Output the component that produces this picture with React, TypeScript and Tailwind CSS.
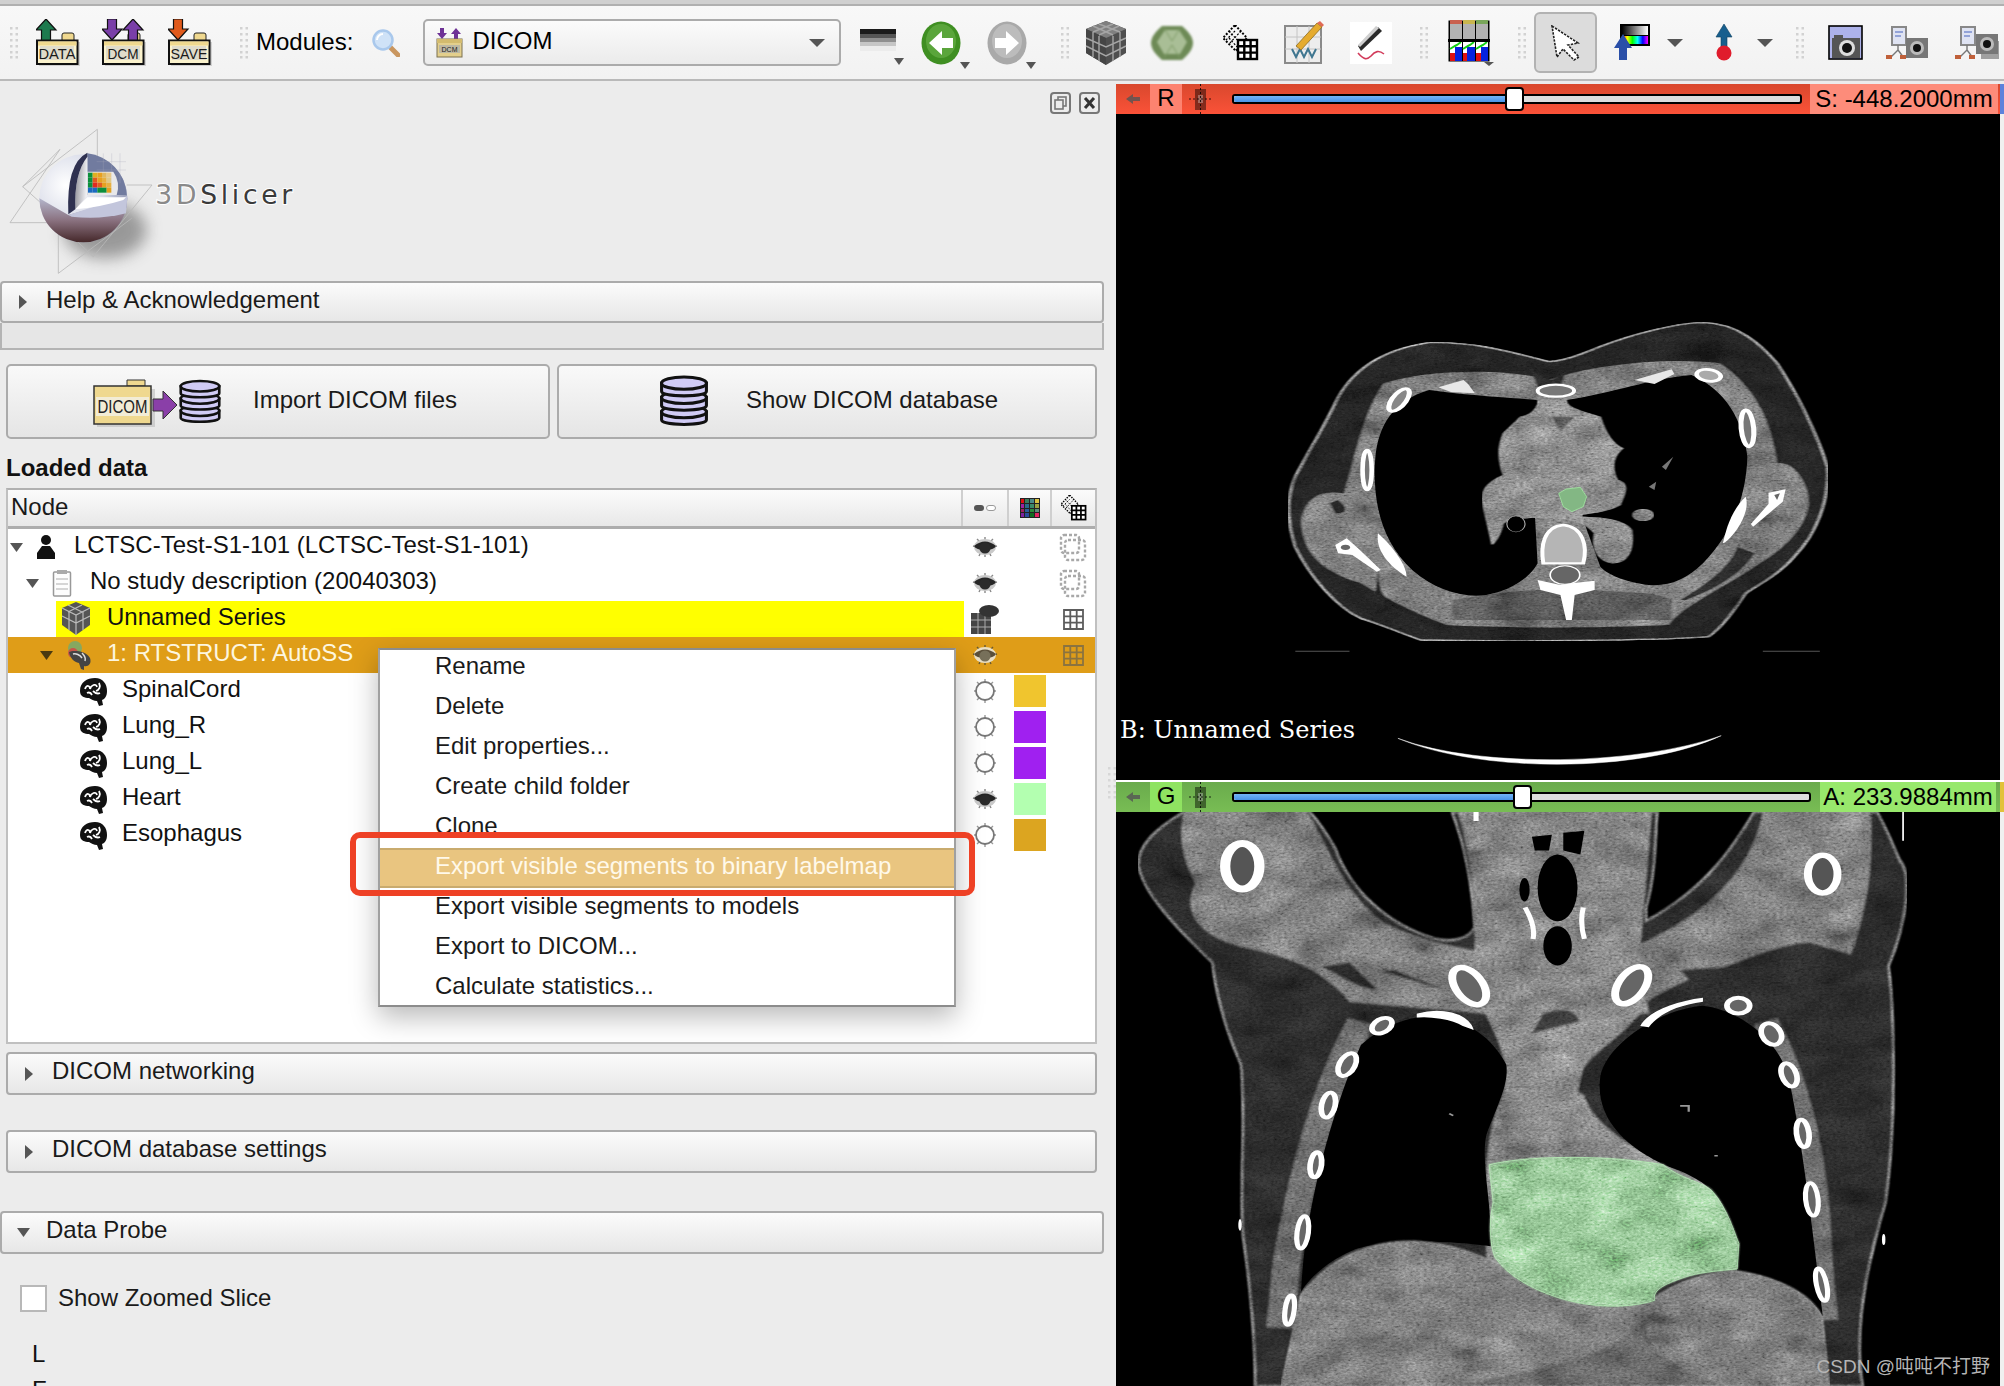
import React from 'react';

const SANS = "font-['Liberation_Sans',Arial,sans-serif]";

// ---- small toolbar drawings ----

function Grip({ className = '' }: { className?: string }) {
  return (
    <svg width="8" height="32" viewBox="0 0 8 32" className={`shrink-0 ${className}`}>
      {[0, 6, 12, 18, 24, 29].map((y) => (
        <g key={y} fill="#d2d2d2">
          <rect x="0" y={y} width="2.5" height="2.5" />
          <rect x="5.5" y={y} width="2.5" height="2.5" />
        </g>
      ))}
    </svg>
  );
}

function Arrow({ x, up, color }: { x: number; up: boolean; color: string }) {
  const pts = up ? '10,0 20,11 14.5,11 14.5,21 5.5,21 5.5,11 0,11' : '5.5,0 14.5,0 14.5,10 20,10 10,21 0,10 5.5,10';
  return <polygon points={pts} transform={`translate(${x} 0)`} fill={color} stroke="#111" strokeWidth="1.2" />;
}

function FolderIcon({ label, children, className = '' }: { label: string; children: React.ReactNode; className?: string }) {
  return (
    <svg width="45" height="48" viewBox="0 0 45 48" className={`shrink-0 ${className}`}>
      <rect x="3" y="23" width="41" height="24" fill="#bbb" opacity="0.6" />
      <path d="M26 22 V16 Q26 14 28 14 H36 Q38 14 38 16 V22 Z" fill="#efd88f" stroke="#222" strokeWidth="1" />
      <rect x="1" y="21.5" width="40.5" height="23.5" fill="#fbf3cd" stroke="#111" strokeWidth="2" />
      <rect x="2" y="22.5" width="38.5" height="4" fill="#efd88f" />
      <rect x="4" y="27" width="34" height="14" fill="#e0dccb" />
      <text x="21" y="40" textAnchor="middle" fontFamily="Liberation Sans" fontSize="15" textLength={label.length > 3 ? 37 : 31} lengthAdjust="spacingAndGlyphs" fill="#1a1a1a">
        {label}
      </text>
      {children}
    </svg>
  );
}

function Magnifier({ className = '' }: { className?: string }) {
  return (
    <svg width="28" height="28" viewBox="0 0 28 28" className={`shrink-0 ${className}`}>
      <line x1="18" y1="18" x2="26" y2="26" stroke="#c9965f" strokeWidth="5" strokeLinecap="round" />
      <circle cx="11" cy="11" r="9.5" fill="#cfe2f7" stroke="#a9c8ec" strokeWidth="2.5" />
      <path d="M5 11 A6 6 0 0 1 11 5" stroke="#fff" strokeWidth="2" fill="none" />
    </svg>
  );
}

function DicomModuleIcon({ className = '' }: { className?: string }) {
  return (
    <svg width="27" height="30" viewBox="0 0 27 30" className={`shrink-0 ${className}`}>
      <polygon points="4,0 8,0 8,5 11,5 6,11 1,5 4,5" fill="#6e3296" />
      <polygon points="20,0 25,6 22,6 22,11 18,11 18,6 15,6" fill="#6e3296" />
      <rect x="1" y="11" width="25" height="18" fill="#e3cf8c" stroke="#7a7150" />
      <rect x="1" y="11" width="25" height="4" fill="#d3bb6e" />
      <rect x="3" y="17" width="21" height="8" fill="#bdb8a2" />
      <text x="13.5" y="24" textAnchor="middle" fontFamily="Liberation Sans" fontSize="7" fill="#222">DCM</text>
    </svg>
  );
}

function SmallDown({ className = '' }: { className?: string }) {
  return (
    <svg width="10" height="7" viewBox="0 0 10 7" className={`shrink-0 ${className}`}>
      <polygon points="0,0 10,0 5,7" fill="#555" />
    </svg>
  );
}

function MenuDown({ className = '' }: { className?: string }) {
  return (
    <svg width="16" height="8" viewBox="0 0 16 8" className={`shrink-0 ${className}`}>
      <polygon points="0,0 16,0 8,8" fill="#555" />
    </svg>
  );
}

function StopsIcon() {
  return (
    <svg width="36" height="22" viewBox="0 0 36 22" className="shrink-0">
      <rect width="36" height="5" fill="#1a1a1a" />
      <rect y="5" width="36" height="4" fill="#555" />
      <rect y="9" width="36" height="4" fill="#8f8f8f" />
      <rect y="13" width="36" height="4" fill="#c6c6c6" />
      <rect y="17" width="36" height="5" fill="#ececec" />
    </svg>
  );
}

function HistoryArrow({ back }: { back: boolean }) {
  const fill = back ? '#3f8f22' : '#a9a9a9';
  const rim = back ? '#7cc15c' : '#d2d2d2';
  const head = back ? '8,22 21,10 21,17 32,17 32,27 21,27 21,34' : '32,22 19,10 19,17 8,17 8,27 19,27 19,34';
  return (
    <svg width="40" height="44" viewBox="0 0 40 44" className="shrink-0">
      <ellipse cx="20" cy="22" rx="19.5" ry="21.5" fill={fill} />
      <ellipse cx="20" cy="20" rx="15" ry="17" fill={rim} opacity="0.45" />
      <polygon points={head} fill="#fff" />
    </svg>
  );
}

function CubeIcon({ className = '' }: { className?: string }) {
  return (
    <svg width="42" height="46" viewBox="0 0 42 46" className={`shrink-0 blur-[0.5px] ${className}`}>
      <polygon points="21,1 41,9 41,33 21,45 1,33 1,9" fill="#4f4f4f" />
      <polygon points="21,1 41,9 21,18 1,9" fill="#7f7f7f" />
      <polygon points="1,9 21,18 21,45 1,33" fill="#454545" />
      <g stroke="#a5a5a5" strokeWidth="1.4" fill="none">
        <path d="M8 6 L28 15 M14 4 L35 12 M34 6 L14 15 M28 4 L8 12" />
        <path d="M1 18 L21 27 L41 18 M1 26 L21 36 L41 26 M8 12 V37 M14 16 V41 M28 16 V41 M35 12 V37" />
      </g>
    </svg>
  );
}

function BarrelIcon({ className = '' }: { className?: string }) {
  return (
    <svg width="44" height="36" viewBox="0 0 44 36" className={`shrink-0 blur-[0.8px] ${className}`}>
      <path d="M12 1 H32 C38 6 43 12 43 18 C43 24 38 30 32 35 H12 C6 30 1 24 1 18 C1 12 6 6 12 1 Z" fill="#6d8a56" />
      <polygon points="15,5 29,5 37,17 30,29 14,29 7,17" fill="#a9be96" />
      <path d="M14 3 L22 16 L30 3 M14 33 L22 20 L30 33" stroke="#7f9c68" strokeWidth="1" fill="none" />
    </svg>
  );
}

function GridPlaneIcon({ size = 36, className = '' }: { size?: number; className?: string }) {
  return (
    <svg width={size} height={size} viewBox="0 0 36 36" className={`shrink-0 ${className}`}>
      <polygon points="12,0 24,13 13,26 0,13" fill="none" stroke="#000" strokeWidth="2" strokeDasharray="2 1.6" />
      <path d="M6 6 L18 19 M12 6 L2 16 M18 6 L6 19 M6 13 L16 24" stroke="#000" strokeWidth="1.2" strokeDasharray="2 1.6" />
      <rect x="15" y="15" width="19" height="19" fill="#fff" stroke="#000" strokeWidth="2.4" />
      <path d="M21.3 15 V34 M27.6 15 V34 M15 21.3 H34 M15 27.6 H34" stroke="#000" strokeWidth="2.4" />
    </svg>
  );
}

function PlotPencilIcon({ className = '' }: { className?: string }) {
  return (
    <svg width="42" height="44" viewBox="0 0 42 44" className={`shrink-0 ${className}`}>
      <rect x="1" y="5" width="36" height="37" fill="#ededed" stroke="#8a8a8a" strokeWidth="2" />
      <path d="M1 16 H37 M1 28 H37 M13 5 V42 M25 5 V42" stroke="#c4c4c4" strokeWidth="1" />
      <path d="M8 28 L12 36 L16 28 L20 36 L24 28 L28 36 L32 28" stroke="#3f7690" strokeWidth="2" fill="none" />
      <path d="M12 25 L33 2 L38 6 L17 29 Z" fill="#e5ab2e" stroke="#8d6c1f" strokeWidth="0.8" />
      <path d="M33 2 L36 0 L40 4 L38 6 Z" fill="#e06a55" />
    </svg>
  );
}

function WhitePencilIcon({ className = '' }: { className?: string }) {
  return (
    <svg width="42" height="42" viewBox="0 0 42 42" className={`shrink-0 ${className}`}>
      <rect width="42" height="42" fill="#fff" />
      <polygon points="8,24 28,5 32,9 11,29" fill="#2a2a2a" />
      <polygon points="8,23 26,4 29,6 10,25" fill="#cfcfcf" />
      <path d="M8 31 C 14 38, 17 38, 21 34 C 25 29, 29 28, 34 32" stroke="#d23a5a" strokeWidth="1.6" fill="none" />
    </svg>
  );
}

function LayoutChartIcon({ className = '' }: { className?: string }) {
  const col = (x: number, top: string, red: number) => (
    <g key={x} transform={`translate(${x} 0)`}>
      <rect x="0" y="0" width="12" height="4" fill={top} />
      <rect x="0" y="4" width="12" height="15" fill="#b2b2b2" />
      <rect x="0" y="22" width="12" height="19" fill="#fff" />
      <rect x="0" y={33} width={red} height="8" fill="#e01010" />
      <rect x={red} y="27" width={12 - red} height="14" fill="#0622e0" />
      <path d="M0 29 L5 26 L7 25 L11 22" stroke="#12d012" strokeWidth="2" fill="none" />
    </g>
  );
  return (
    <svg width="48" height="46" viewBox="0 0 48 46" className={`shrink-0 ${className}`}>
      <rect x="0.5" y="0.5" width="41" height="41" fill="#000" />
      {col(2, '#c9604e', 5)}
      {col(15, '#c9b64e', 4)}
      {col(28, '#79a65a', 5)}
      <rect x="0" y="19" width="42" height="3" fill="#000" />
      <polygon points="36,42 46,42 41,46" fill="#555" />
    </svg>
  );
}

function PointerIcon() {
  return (
    <svg width="30" height="36" viewBox="0 0 30 36">
      <polygon points="1,1 27,18 17,20 28,32 23,35 12,24 6,32" fill="#fff" stroke="#222" strokeWidth="1.6" strokeDasharray="2.4 1.2" />
    </svg>
  );
}

function WindowLevelIcon({ className = '' }: { className?: string }) {
  return (
    <svg width="38" height="38" viewBox="0 0 38 38" className={`shrink-0 ${className}`}>
      <defs>
        <linearGradient id="wlGray" x1="0" x2="1">
          <stop offset="0" stopColor="#000" />
          <stop offset="1" stopColor="#fff" />
        </linearGradient>
        <linearGradient id="wlRainbow" x1="0" x2="1">
          <stop offset="0" stopColor="#f00" />
          <stop offset="0.2" stopColor="#ff0" />
          <stop offset="0.4" stopColor="#0f0" />
          <stop offset="0.6" stopColor="#0ff" />
          <stop offset="0.8" stopColor="#00f" />
          <stop offset="1" stopColor="#f0f" />
        </linearGradient>
      </defs>
      <rect x="7" y="0" width="30" height="22" fill="#000" />
      <rect x="9" y="2" width="26" height="9" fill="url(#wlGray)" />
      <rect x="9" y="12" width="26" height="8" fill="url(#wlRainbow)" />
      <polygon points="10,10 19,24 14,24 14,36 6,36 6,24 1,24" fill="#2a4fa8" />
    </svg>
  );
}

function FiducialIcon({ className = '' }: { className?: string }) {
  return (
    <svg width="20" height="37" viewBox="0 0 20 37" className={`shrink-0 ${className}`}>
      <polygon points="10,0 18,13 13,13 13,26 7,26 7,13 2,13" fill="#175f8e" stroke="#0e3f60" strokeWidth="0.6" />
      <ellipse cx="10" cy="29" rx="7.5" ry="7.5" fill="#e01c2c" />
    </svg>
  );
}

function CameraIcon({ className = '' }: { className?: string }) {
  return (
    <svg width="35" height="35" viewBox="0 0 35 35" className={`shrink-0 ${className}`}>
      <rect x="1" y="1" width="33" height="33" fill="#adb2ea" stroke="#000" strokeWidth="1.6" />
      <rect x="4" y="13" width="28" height="20" fill="#555" />
      <rect x="6" y="10" width="9" height="4" fill="#555" />
      <circle cx="19" cy="23" r="8" fill="#ddd" />
      <circle cx="19" cy="23" r="5" fill="#111" />
    </svg>
  );
}

function SceneCameraIcon({ stacked = false, className = '' }: { stacked?: boolean; className?: string }) {
  return (
    <svg width="44" height="34" viewBox="0 0 44 34" className={`shrink-0 ${className}`}>
      <rect x="6" y="1" width="14" height="18" fill="#dfe3f2" stroke="#888" strokeWidth="2" />
      <path d="M9 6 H17 M9 10 H15" stroke="#93a3d8" strokeWidth="2" />
      <path d="M12 19 V24 M12 24 L4 32 M12 24 L18 32" stroke="#777" strokeWidth="1.4" />
      <rect x="0" y="29" width="6" height="4" fill="#c0603a" />
      <rect x="14" y="29" width="6" height="4" fill="#c0603a" />
      {stacked && <rect x="26" y="15" width="18" height="18" fill="#a0a0a0" />}
      <rect x={stacked ? 21 : 20} y={stacked ? 8 : 12} width="22" height="20" fill="#777" />
      <circle cx={stacked ? 32 : 31} cy={stacked ? 18 : 22} r="7" fill="#bbb" />
      <circle cx={stacked ? 32 : 31} cy={stacked ? 18 : 22} r="4" fill="#111" />
    </svg>
  );
}

// ---- 3D Slicer logo ----

function SlicerLogo() {
  const cells = ['#0c8f3c', '#e0b020', '#e8a020', '#e0b860', '#e8c888', '#0c8f3c', '#e25a20', '#e8a020', '#e8b040', '#e0c888', '#0c8f3c', '#e02a20', '#e25a20', '#e8a020', '#e8b040', '#1c6ac0', '#1c6ac0', '#0c8f3c', '#0c8f3c', '#e0a020'];
  return (
    <svg width="320" height="160" viewBox="0 0 960 480" className="block">
      <defs>
        <radialGradient id="sphereTop" cx="0.3" cy="0.35" r="0.8">
          <stop offset="0" stopColor="#ffffff" />
          <stop offset="0.55" stopColor="#d8dbe8" />
          <stop offset="1" stopColor="#7f86a6" />
        </radialGradient>
        <linearGradient id="sphereBottom" x1="0" y1="0" x2="0" y2="1">
          <stop offset="0" stopColor="#b4b6cc" />
          <stop offset="0.5" stopColor="#8a7280" />
          <stop offset="1" stopColor="#45282a" />
        </linearGradient>
        <linearGradient id="innerWall" x1="0" y1="0" x2="1" y2="0.2">
          <stop offset="0" stopColor="#8d8d95" />
          <stop offset="1" stopColor="#efeff2" />
        </linearGradient>
        <filter id="logoShadow" x="-50%" y="-50%" width="200%" height="200%">
          <feGaussianBlur stdDeviation="24" />
        </filter>
      </defs>
      <ellipse cx="315" cy="330" rx="125" ry="85" fill="#555" opacity="0.55" filter="url(#logoShadow)" />
      <g stroke="#b9b9b9" strokeWidth="2.5" fill="none">
        <path d="M292 28 L68 200 L180 88 L30 308 H300 M292 28 V190 M68 200 L180 300" />
        <path d="M456 195 H380 M456 195 L280 410 L175 310 V460 L395 295" />
      </g>
      <circle cx="250" cy="235" r="132" fill="url(#sphereTop)" />
      <path d="M118 235 A132 132 0 0 0 382 235 L205 285 Z" fill="url(#sphereBottom)" />
      <path d="M205 285 L382 228 L378 280 Q300 300 215 290 Z" fill="#c3c6dc" />
      <path d="M262 100 A132 132 0 0 1 380 225 L262 225 Z" fill="#717b9f" />
      <path d="M262 110 Q222 160 226 268 L262 228 Z" fill="url(#innerWall)" />
      <path d="M262 98 Q198 130 205 283 L226 268 Q222 160 262 110 Z" fill="#2f3150" />
      <path d="M262 155 H340 A80 80 0 0 1 350 225 L262 225 Z" fill="#e8e8ea" />
      <path d="M226 268 L262 232 H378 L370 240 Q300 262 226 268 Z" fill="#fff" />
      <g stroke="#aab" strokeWidth="1.2" fill="none" opacity="0.7">
        <path d="M310 100 V155 M335 100 V155 M360 100 V190 M290 125 H378 M290 150 H378" />
      </g>
      {cells.map((c, i) => (
        <rect key={i} x={264 + (i % 5) * 14} y={158 + Math.floor(i / 5) * 15} width="14" height="15" fill={c} />
      ))}
      <text x="466" y="252" fontFamily="DejaVu Sans" fontSize="80" letterSpacing="11" stroke="#fff" strokeWidth="6" paintOrder="stroke" fill="#3a3a3a">
        <tspan fill="#8a8a8a">3D</tspan>Slicer
      </text>
    </svg>
  );
}

// ---- tree and panel icons ----

function EyeOpen({ dim = false }: { dim?: boolean }) {
  return (
    <svg width="26" height="22" viewBox="0 0 26 22" className="blur-[0.3px]">
      <path d="M5 3 L8 6 M13 1 V5 M21 3 L18 6 M1 10 L5 11 M25 10 L21 11 M7 20 L9 16 M19 20 L17 16 M13 21 V17" stroke={dim ? '#6a5a30' : '#888'} strokeWidth="1.4" />
      <ellipse cx="13" cy="11" rx="11" ry="8" fill={dim ? '#e9dfc5' : '#c9c9c9'} />
      <path d="M2 10 Q13 1 24 10 Q22 14 13 14 Q4 14 2 10 Z" fill={dim ? '#5a4f3a' : '#262626'} />
      <circle cx="13" cy="12" r="5.6" fill={dim ? '#77705a' : '#2b2b2b'} />
    </svg>
  );
}

function EyeClosed() {
  return (
    <svg width="26" height="26" viewBox="0 0 26 26">
      <path d="M5 4 L8 7 M13 1 V5 M21 4 L18 7 M2 13 L5 13 M24 13 L21 13 M5 22 L8 19 M21 22 L18 19 M13 25 V21" stroke="#999" strokeWidth="1.4" />
      <ellipse cx="13" cy="13" rx="9" ry="9" fill="#fff" stroke="#777" strokeWidth="1.8" />
    </svg>
  );
}

function SliceBoxIcon() {
  return (
    <svg width="30" height="30" viewBox="0 0 30 30">
      <rect x="3" y="3" width="18" height="18" rx="3" fill="none" stroke="#a8a8a8" strokeWidth="2.4" strokeDasharray="3 2" />
      <rect x="7" y="8" width="20" height="20" rx="3" fill="none" stroke="#a8a8a8" strokeWidth="2.4" strokeDasharray="3 2" />
    </svg>
  );
}

function TableIcon({ dim = false }: { dim?: boolean }) {
  return (
    <svg width="21" height="21" viewBox="0 0 21 21">
      <path d="M1 1 H20 V20 H1 Z M7.3 1 V20 M13.7 1 V20 M1 7.3 H20 M1 13.7 H20" fill="none" stroke={dim ? '#8a7340' : '#5c5c5c'} strokeWidth="1.8" />
    </svg>
  );
}

function BrainIcon() {
  return (
    <svg width="30" height="29" viewBox="0 0 30 29" className="shrink-0">
      <path d="M2 14 C2 5 9 1 17 1 C25 1 29 7 29 14 C29 19 27 22 24 23 L25 28 L21 29 L19 24 C16 24 13 22 11 21 C7 21 2 20 2 14 Z" fill="#111" />
      <path d="M7 12 C9 7 12 9 12 12 C13 8 18 6 19 10 M21 6 C23 10 21 13 18 14 M9 16 C11 15 13 16 14 18 M15 14 C17 16 20 17 22 16" stroke="#fff" strokeWidth="1.8" fill="none" />
    </svg>
  );
}

function SegmentationIcon({ className = '' }: { className?: string }) {
  return (
    <svg width="30" height="30" viewBox="0 0 30 30" className={`shrink-0 ${className}`}>
      <circle cx="11" cy="8" r="7" fill="#86a860" />
      <circle cx="9" cy="13" r="5" fill="#c85548" />
      <path d="M5 12 C8 10 22 10 26 18 C28 24 24 27 20 26 L20 30 L17 29 L15 23 C10 22 6 18 5 12 Z" fill="#444" />
      <path d="M9 14 C12 13 16 15 18 18 M18 13 C20 15 22 18 21 21" stroke="#ddd" strokeWidth="1.5" fill="none" />
    </svg>
  );
}

function VolumeIcon() {
  return (
    <svg width="30" height="34" viewBox="0 0 30 34" className="shrink-0 blur-[0.3px]">
      <polygon points="15,0 29,6 29,23 15,33 1,23 1,6" fill="#555" />
      <path d="M1 6 L15 13 L29 6 M15 13 V33 M1 14 L15 21 L29 14 M7 3 L21 10 M21 3 L7 10 M8 9 V28 M22 9 V28" stroke="#bbb" strokeWidth="1.2" fill="none" />
    </svg>
  );
}

function PatientIcon({ className = '' }: { className?: string }) {
  return (
    <svg width="20" height="26" viewBox="0 0 20 26" className={`shrink-0 ${className}`}>
      <circle cx="10" cy="6" r="5" fill="#111" />
      <path d="M6 12 H14 L19 19 V25 H1 V19 Z" fill="#111" />
    </svg>
  );
}

function StudyIcon({ className = '' }: { className?: string }) {
  return (
    <svg width="20" height="28" viewBox="0 0 20 28" className={`shrink-0 ${className}`}>
      <rect x="1.5" y="3" width="17" height="24" rx="1" fill="#fdfdfd" stroke="#999" strokeWidth="1.5" />
      <rect x="5" y="1" width="10" height="4" fill="#aaa" />
      <path d="M4 10 H16 M4 15 H16 M4 20 H16" stroke="#c8c8c8" strokeWidth="1.5" />
    </svg>
  );
}

function Disclosure({ open, color = '#555', className = '' }: { open: boolean; color?: string; className?: string }) {
  return open ? (
    <svg width="13" height="9" viewBox="0 0 13 9" className={`shrink-0 ${className}`}>
      <polygon points="0,0 13,0 6.5,9" fill={color} />
    </svg>
  ) : (
    <svg width="8" height="14" viewBox="0 0 8 14" className={`shrink-0 ${className}`}>
      <polygon points="0,0 8,7 0,14" fill={color} />
    </svg>
  );
}

function DatabaseIcon({ w, h }: { w: number; h: number }) {
  return (
    <svg width={w} height={h} viewBox="0 0 48 52" className="shrink-0">
      {[36, 22, 8].map((y) => (
        <g key={y}>
          <path d={`M2 ${y} V${y + 8} C2 ${y + 14} 46 ${y + 14} 46 ${y + 8} V${y} Z`} fill="#d0cbf5" stroke="#111" strokeWidth="3" />
          <ellipse cx="24" cy={y} rx="22" ry="6" fill="#d0cbf5" stroke="#111" strokeWidth="3" />
        </g>
      ))}
    </svg>
  );
}

function ImportIcon() {
  return (
    <svg width="86" height="52" viewBox="0 0 86 52" className="shrink-0">
      <rect x="4" y="13" width="58" height="38" fill="#bbb" opacity="0.6" />
      <path d="M34 10 V4 H52 V10 Z" fill="#efd88f" stroke="#333" />
      <rect x="1" y="10" width="57" height="38" fill="#efd88f" stroke="#333" strokeWidth="1.5" />
      <rect x="3" y="21" width="53" height="19" fill="#f2ecd6" />
      <text x="29.5" y="37" textAnchor="middle" fontFamily="Liberation Sans" fontSize="19" textLength="50" lengthAdjust="spacingAndGlyphs" fill="#222">DICOM</text>
      <polygon points="60,23 70,23 70,15 84,29 70,43 70,35 60,35" fill="#8a3fa8" stroke="#333" />
    </svg>
  );
}

// ---- CT drawings: coordinates are traced from the scan itself ----

function CtFilter({ id }: { id: string }) {
  return (
    <filter id={id} x="0" y="0" width="100%" height="100%">
      <feGaussianBlur in="SourceGraphic" stdDeviation="2.2" result="soft" />
      <feTurbulence type="fractalNoise" baseFrequency="0.16 0.2" numOctaves="2" seed="4" result="fine" />
      <feColorMatrix in="fine" type="matrix" values="1.3 0 0 0 -0.15 1.3 0 0 0 -0.15 1.3 0 0 0 -0.15 0 0 0 1 0" result="fineGray" />
      <feComposite in="fineGray" in2="soft" operator="in" result="fineClip" />
      <feBlend in="fineClip" in2="soft" mode="overlay" result="grained" />
      <feTurbulence type="fractalNoise" baseFrequency="0.012 0.016" numOctaves="3" seed="9" result="cloud" />
      <feColorMatrix in="cloud" type="matrix" values="1.3 0 0 0 -0.15 1.3 0 0 0 -0.15 1.3 0 0 0 -0.15 0 0 0 1 0" result="cloudGray" />
      <feComposite in="cloudGray" in2="soft" operator="in" result="cloudClip" />
      <feBlend in="cloudClip" in2="grained" mode="overlay" />
    </filter>
  );
}

function Rib({ cx, cy, rx, ry, rot = 0, w = 9, fill = '#666' }: { cx: number; cy: number; rx: number; ry: number; rot?: number; w?: number; fill?: string }) {
  return <ellipse cx={cx} cy={cy} rx={rx} ry={ry} transform={`rotate(${rot} ${cx} ${cy})`} fill={fill} stroke="#fff" strokeWidth={w} />;
}

function AxialScan() {
  return (
    <svg viewBox="10.5 -558 1550.5 1998" preserveAspectRatio="none" className="block w-full h-full">
      <defs>
        <CtFilter id="ctAxial" />
      </defs>
      <g filter="url(#ctAxial)">
        <path d="M770 185 C800 182 830 160 860 140 C920 100 1000 68 1040 68 C1100 70 1140 130 1170 190 C1205 280 1240 400 1258 500 C1262 600 1240 700 1200 770 C1170 830 1130 860 1115 880 C1095 930 1075 980 1050 1010 C950 1022 700 1025 545 1020 C510 1000 480 975 440 955 C400 925 350 830 325 740 C310 660 310 590 325 530 C350 450 375 380 395 310 C420 220 470 150 560 128 C650 125 720 165 770 185 Z" fill="#242424" stroke="#a2a2a2" strokeWidth="4" />
        <path d="M480 250 C560 205 700 205 770 240 C840 195 980 170 1070 190 C1130 260 1160 360 1170 490 C1200 480 1230 560 1225 620 C1215 700 1170 760 1130 800 C1090 850 1000 920 980 975 C850 985 700 985 590 975 C520 930 470 880 440 850 C380 820 340 770 335 670 C340 590 370 570 410 580 C430 480 440 350 480 250 Z" fill="#808080" />
        <path d="M470 820 C475 850 470 880 490 900 C530 940 560 960 590 975 L510 935 L465 880 Z" fill="#1e1e1e" />
        <path d="M400 600 C415 620 420 640 395 640 L385 610 Z" fill="#222" />
        <path d="M1010 900 C1060 870 1110 820 1130 760 L1100 740 C1090 800 1040 860 1000 900 Z" fill="#2a2a2a" />
        <path d="M600 900 C680 880 720 870 760 870 L850 870 C900 880 950 870 985 900 L985 960 L600 960 Z" fill="#5c5c5c" />
        <path d="M740 215 L775 240 L800 215 L790 260 L750 260 Z" fill="#2e2e2e" />
      </g>
      <path d="M750 300 C690 292 620 285 560 270 C500 300 470 370 465 480 C460 620 480 730 530 810 C570 870 620 895 660 885 C695 875 735 840 750 790 L745 640 Z" fill="#000" />
      <path d="M800 300 C880 280 950 235 1020 225 C1080 270 1110 360 1118 470 C1115 600 1090 700 1040 790 C1010 840 980 860 945 855 C900 845 870 820 860 800 L830 660 Z" fill="#000" />
      <g filter="url(#ctAxial)">
        <path d="M720 350 C745 345 755 305 750 300 L800 300 C800 320 820 330 860 350 C870 400 880 430 900 445 C880 470 880 510 890 540 C915 550 900 590 895 615 C870 640 830 640 815 650 C840 650 900 650 915 690 C920 760 905 790 880 790 C850 780 845 730 850 700 C830 660 800 650 760 655 C730 650 700 660 690 670 C685 700 680 720 670 735 C665 690 660 660 655 620 C650 580 655 550 690 525 C680 480 680 440 690 400 Z" fill="#8f8f8f" />
        <circle cx="935" cy="645" r="18" fill="#7b7b7b" />
        <path d="M775 350 L815 350 L790 395 Z" fill="#5a5a5a" />
      </g>
      <ellipse cx="712" cy="672" rx="16" ry="24" fill="#000" stroke="#aaa" strokeWidth="2" />
      <path d="M968 500 L988 470 L975 510 Z M945 560 L958 545 L955 570 Z" fill="#777" />
      <path d="M795 675 C830 680 838 740 830 790 L760 790 C755 740 760 680 795 675 Z" fill="#b5b5b5" stroke="#fff" strokeWidth="7" />
      <ellipse cx="798" cy="825" rx="26" ry="28" fill="#666" stroke="#fff" strokeWidth="3" />
      <path d="M750 840 L790 855 L810 850 L850 842 L850 870 L815 885 L810 960 L800 960 L790 885 L755 870 Z" fill="#fff" />
      <Rib cx={782} cy={272} rx={32} ry={18} w={7} fill="#777" />
      <Rib cx={507} cy={300} rx={13} ry={36} rot={22} w={9} fill="#888" />
      <path d="M576 262 L620 240 L628 252 L640 280 L598 276 Z" fill="#e8e8e8" />
      <path d="M920 240 L985 208 L990 222 L955 252 Z" fill="#e8e8e8" />
      <Rib cx={1050} cy={226} rx={22} ry={17} rot={25} w={8} fill="#aaa" />
      <Rib cx={1118} cy={385} rx={11} ry={55} rot={-3} w={9} fill="#777" />
      <Rib cx={451} cy={510} rx={8} ry={60} w={8} fill="#777" />
      <path d="M1115 590 C1125 640 1090 720 1075 730 C1080 690 1090 630 1115 590 Z" fill="#fff" />
      <path d="M470 700 C490 730 520 790 520 830 C490 800 465 750 470 700 Z" fill="#fff" />
      <path d="M395 735 L415 715 L435 745 L475 810 L468 815 L425 765 L400 760 Z" fill="#fff" />
      <circle cx="413" cy="742" r="8" fill="#666" />
      <path d="M1155 578 L1185 568 L1180 605 L1128 680 L1124 672 L1155 612 Z" fill="#fff" />
      <path d="M1165 585 L1175 580 L1170 600 Z" fill="#666" />
      <path d="M787 580 L800 567 L825 562 L836 590 L830 620 L810 635 L795 620 Z" fill="#83b784" stroke="#a7f5a7" strokeWidth="1.5" />
      <path d="M505 1315 C650 1420 930 1420 1072 1307 C930 1395 650 1408 505 1315 Z" fill="#fff" stroke="#fff" strokeWidth="1" />
      <path d="M325 1054 H420 M1145 1054 H1245" stroke="#555" strokeWidth="3" />
    </svg>
  );
}

function CoronalScan() {
  const heart = 'M665 1005 C720 985 850 975 970 1005 C1000 1040 1040 1050 1055 1070 C1085 1120 1095 1180 1103 1205 L1100 1270 C1060 1275 1030 1280 1010 1290 C980 1305 950 1320 955 1350 C900 1375 830 1365 780 1340 C740 1320 700 1290 675 1240 C665 1200 665 1150 672 1100 Z';
  return (
    <svg viewBox="10.5 107 1550.5 1461" preserveAspectRatio="none" className="block w-full h-full">
      <defs>
        <CtFilter id="ctCoronal" />
      </defs>
      <g filter="url(#ctCoronal)">
        <path d="M130 107 C80 150 50 190 50 240 C55 300 100 380 180 490 C185 560 200 650 230 750 C240 900 225 1100 235 1200 C245 1300 255 1450 255 1568 L1320 1568 C1300 1400 1340 1200 1360 1100 C1380 900 1375 600 1365 500 C1400 380 1405 260 1385 230 C1370 180 1355 130 1345 107 L1130 107 C1100 180 1050 300 940 385 L940 350 C960 250 955 150 960 107 L600 107 C620 180 635 280 640 400 C630 430 600 440 570 430 C480 390 420 300 395 200 C375 150 365 130 350 107 Z" fill="#2c2c2c" stroke="#8c8c8c" strokeWidth="3" />
        <path d="M130 107 L345 107 C380 180 400 300 480 390 C540 430 600 450 640 460 L660 620 L420 590 C370 500 300 470 230 450 C150 420 125 350 150 290 C125 220 120 160 130 107 Z" fill="#808080" />
        <path d="M1145 107 L1335 107 C1335 200 1340 300 1300 470 L1230 440 C1200 430 1100 490 1040 520 C1000 540 960 570 930 600 L920 450 C1000 400 1120 300 1145 107 Z" fill="#808080" />
        <path d="M610 107 L950 107 C945 200 940 300 930 460 L945 620 L650 620 L640 460 C640 300 630 200 610 107 Z" fill="#858585" />
        <path d="M650 600 L940 600 C900 680 860 700 830 760 C815 830 850 900 920 960 L1060 1060 C1100 1150 1100 1270 1100 1270 L660 1270 C660 1100 650 950 690 820 C700 760 690 700 650 600 Z" fill="#8e8e8e" />
        <path d="M440 640 C380 800 340 1000 310 1250 L298 1420" stroke="#707070" strokeWidth="48" fill="none" />
        <path d="M1150 640 C1210 800 1240 1000 1245 1250 L1255 1400" stroke="#707070" strokeWidth="44" fill="none" />
        <path d="M370 500 C400 520 440 560 470 560 L420 490 Z M470 510 C520 530 560 550 590 560 L500 510 Z M1000 510 C1040 500 1100 500 1130 510 L1020 540 Z M1180 540 L1240 600 L1230 610 L1170 560 Z" fill="#2c2c2c" />
        <path d="M760 620 C790 610 810 600 825 640 L740 670 Z" fill="#3a3a3a" />
        <path d="M830 760 C850 720 880 700 900 690 C870 740 860 800 860 850 L820 820 Z" fill="#2a2a2a" />
      </g>
      <path d="M540 630 C620 620 670 680 695 750 C700 800 680 850 660 930 C650 1000 670 1100 668 1212 C600 1200 500 1190 430 1220 C380 1250 345 1300 335 1330 C340 1150 380 900 440 700 C470 660 510 635 540 630 Z" fill="#000" />
      <path d="M1040 600 C1100 610 1170 680 1190 780 C1215 950 1235 1200 1250 1390 C1230 1340 1180 1290 1100 1275 L1085 1150 C1075 1080 1040 1040 980 1010 C900 960 850 880 860 780 C870 700 960 610 1040 600 Z" fill="#000" />
      <g filter="url(#ctCoronal)">
        <path d="M335 1335 C380 1250 450 1195 540 1200 C620 1210 680 1250 740 1310 C800 1350 900 1370 950 1350 C980 1310 1050 1275 1100 1275 C1170 1290 1240 1340 1250 1400 L1262 1568 L300 1568 Z" fill="#808080" />
        <path d="M620 1568 C700 1530 860 1520 940 1400 C930 1480 1000 1530 1080 1568 Z" fill="#6a6a6a" />
        <path d={heart} fill="#9ccb9c" />
      </g>
      <path d={heart} fill="none" stroke="#b8f5b8" strokeWidth="1.5" />
      <path d="M740 170 L775 165 L770 205 L745 205 Z M795 160 L832 155 L825 215 L795 205 Z" fill="#000" />
      <ellipse cx="785" cy="300" rx="35" ry="85" fill="#000" />
      <ellipse cx="785" cy="448" rx="25" ry="50" fill="#000" />
      <ellipse cx="727" cy="305" rx="9" ry="30" fill="#000" />
      <path d="M728 350 C740 380 745 410 742 430 M830 350 C825 380 828 410 832 430 M642 107 V130" stroke="#fff" strokeWidth="9" fill="none" />
      <Rib cx={232} cy={245} rx={30} ry={58} w={18} fill="#555" />
      <Rib cx={1250} cy={265} rx={26} ry={48} w={14} fill="#555" />
      <Rib cx={630} cy={550} rx={25} ry={50} rot={-22} w={14} fill="#666" />
      <Rib cx={915} cy={548} rx={24} ry={50} rot={22} w={14} fill="#666" />
      <Rib cx={477} cy={651} rx={15} ry={22} rot={35} w={10} />
      <path d="M540 622 C580 605 625 620 635 658 L620 650 C600 632 560 625 540 628 Z" fill="#fff" stroke="#fff" strokeWidth="4" />
      <path d="M930 652 C940 620 985 590 1040 580 L1040 590 C990 600 960 625 945 655 Z" fill="#fff" />
      <Rib cx={416} cy={750} rx={14} ry={30} rot={18} w={10} />
      <Rib cx={383} cy={853} rx={12} ry={32} rot={8} w={10} />
      <Rib cx={361} cy={1005} rx={10} ry={32} rot={5} w={10} />
      <Rib cx={338} cy={1177} rx={10} ry={42} rot={5} w={9} />
      <Rib cx={315} cy={1375} rx={8} ry={38} rot={5} w={9} />
      <Rib cx={1102} cy={600} rx={20} ry={20} w={10} />
      <Rib cx={1160} cy={672} rx={17} ry={28} rot={-15} w={10} />
      <Rib cx={1191} cy={776} rx={13} ry={30} rot={-12} w={10} />
      <Rib cx={1215} cy={925} rx={11} ry={35} rot={-5} w={10} />
      <Rib cx={1231} cy={1093} rx={11} ry={42} rot={-4} w={9} />
      <Rib cx={1248} cy={1310} rx={9} ry={42} rot={-8} w={9} />
      <path d="M1391 107 V180" stroke="#fff" strokeWidth="3" />
      <ellipse cx="228" cy="1158" rx="3" ry="15" fill="#fff" />
      <ellipse cx="1357" cy="1195" rx="3" ry="14" fill="#fff" />
      <path d="M595 875 L602 880 M1000 855 H1015 V870 M1060 982 H1066" stroke="#999" strokeWidth="4" />
    </svg>
  );
}

// ---- slice view controller bar ----

function SliceBar({ name, value, bar, box, valueBox, pct, trackClass }: { name: string; value: string; bar: string; box: string; valueBox: string; pct: number; trackClass: string }) {
  return (
    <div className={`flex h-[30px] items-stretch ${bar}`}>
      <svg width="34" height="30" viewBox="0 0 34 30" className="shrink-0">
        <path d="M10 15 L17 10 V13 H24 V17 H17 V20 Z" fill="#555" opacity="0.8" />
      </svg>
      <div className={`w-[32px] shrink-0 flex items-center justify-center text-[24px] leading-none text-black pb-[3px] ${box}`}>{name}</div>
      <svg width="34" height="30" viewBox="0 0 34 30" className="shrink-0">
        <rect x="13" y="5" width="11" height="21" fill="#000" opacity="0.45" />
        <rect x="16" y="11" width="5" height="8" fill="#fff" opacity="0.3" />
        <path d="M18.5 0 V30 M7 15 H30" stroke="#000" strokeWidth="1" strokeDasharray="2 2" opacity="0.8" />
      </svg>
      <div className={`relative ml-[16px] self-center h-[10px] rounded-[3px] border-2 border-black bg-[#dddddd] ${trackClass}`}>
        <div className="h-full rounded-l-[2px] bg-gradient-to-b from-[#72b4f6] to-[#4a94e8]" style={{ width: `${pct}%` }} />
        <div className="absolute top-[-9px] h-[24px] w-[19px] rounded-[4px] border-2 border-black bg-white" style={{ left: `${pct}%` }} />
      </div>
      <div className={`flex items-center justify-center text-[24px] leading-none text-black pb-[1px] ${valueBox}`}>{value}</div>
    </div>
  );
}

// ---- panel pieces ----

function Collapsible({ label, open, tall, triangle, textClass }: { label: string; open: boolean; tall: string; triangle: string; textClass: string }) {
  return (
    <div className={`flex items-center rounded-[4px] border-2 border-[#ababab] bg-gradient-to-b from-[#fbfbfb] to-[#e7e7e7] ${tall}`}>
      <Disclosure open={open} className={triangle} />
      <span className={`text-[24px] leading-none text-[#1a1a1a] pb-[5px] ${textClass}`}>{label}</span>
    </div>
  );
}

const segments = [
  { name: 'SpinalCord', color: 'bg-[#f0c52e]', shown: false },
  { name: 'Lung_R', color: 'bg-[#a020f0]', shown: false },
  { name: 'Lung_L', color: 'bg-[#a020f0]', shown: false },
  { name: 'Heart', color: 'bg-[#b3ffb0]', shown: true },
  { name: 'Esophagus', color: 'bg-[#dca520]', shown: false },
];

const menuItems = ['Rename', 'Delete', 'Edit properties...', 'Create child folder', 'Clone', 'Export visible segments to binary labelmap', 'Export visible segments to models', 'Export to DICOM...', 'Calculate statistics...'];

function DataTree() {
  return (
    <div className="relative ml-[6px] h-[556px] w-[1091px] border-2 border-[#c0c0c0] border-t-[#b0b0b0] bg-white">
      <div className="flex h-[39px] border-b-[3px] border-[#adadad] bg-gradient-to-b from-[#fbfbfb] to-[#e8e8e8]">
        <div className="flex-1 pl-[3px] pt-[3px] text-[24px] leading-[28px] text-[#1a1a1a]">Node</div>
        <div className="flex w-[46px] items-center justify-center gap-[2px] border-l-2 border-[#cfcfcf]">
          <span className="h-[6px] w-[10px] rounded-full bg-[#555]" />
          <span className="h-[6px] w-[10px] rounded-full border border-[#999] bg-white" />
        </div>
        <div className="flex w-[43px] items-center justify-center border-l-2 border-[#cfcfcf]">
          <div className="grid h-[20px] w-[20px] grid-cols-4 gap-[1px] bg-[#222] p-[1px]">
            {['#e01010', '#3a7a5a', '#4a8a8a', '#d8c040', '#a020a0', '#2a6a8a', '#3a8a6a', '#9aa040', '#a02060', '#2a5a9a', '#2a8a3a', '#5a8a7a', '#8020a0', '#2a4a9a', '#106a20', '#e02060'].map((c, i) => (
              <span key={i} style={{ backgroundColor: c }} />
            ))}
          </div>
        </div>
        <div className="flex w-[45px] items-center justify-center border-l-2 border-[#cfcfcf]">
          <GridPlaneIcon size={26} />
        </div>
      </div>

      <div className="flex h-[36px] items-center pl-[2px]">
        <Disclosure open />
        <PatientIcon className="ml-[13px]" />
        <span className="ml-[18px] flex-1 text-[24px] leading-none pb-[4px] text-[#111]">LCTSC-Test-S1-101 (LCTSC-Test-S1-101)</span>
        <div className="flex w-[50px] justify-center"><EyeOpen /></div>
        <div className="mr-[7px] ml-[48px] flex w-[30px] justify-center"><SliceBoxIcon /></div>
      </div>
      <div className="flex h-[36px] items-center pl-[18px]">
        <Disclosure open />
        <StudyIcon className="ml-[13px]" />
        <span className="ml-[18px] flex-1 text-[24px] leading-none pb-[4px] text-[#111]">No study description (20040303)</span>
        <div className="flex w-[50px] justify-center"><EyeOpen /></div>
        <div className="mr-[7px] ml-[48px] flex w-[30px] justify-center"><SliceBoxIcon /></div>
      </div>
      <div className="flex h-[36px] items-center">
        <div className="ml-[48px] flex h-full w-[908px] items-center bg-[#ffff00] pl-[5px]">
          <VolumeIcon />
          <span className="ml-[16px] text-[24px] leading-none pb-[4px] text-[#111]">Unnamed Series</span>
        </div>
        <div className="flex w-[42px] justify-center">
          <svg width="30" height="32" viewBox="0 0 30 32">
            <rect x="1" y="10" width="20" height="21" fill="#444" />
            <path d="M1 17 H21 M1 24 H21 M8 10 V31 M15 10 V31" stroke="#aaa" />
            <ellipse cx="19" cy="8" rx="10" ry="6" fill="#333" />
          </svg>
        </div>
        <div className="ml-[52px] flex w-[30px] justify-center"><TableIcon /></div>
      </div>
      <div className="flex h-[36px] items-center bg-[#df9d18] pl-[32px]">
        <Disclosure open color="#4a3a10" />
        <SegmentationIcon className="ml-[11px]" />
        <span className="ml-[13px] w-[865px] shrink-0 text-[24px] leading-none pb-[4px] text-[#fdf6df]">1: RTSTRUCT: AutoSS</span>
        <div className="flex flex-1 justify-start"><EyeOpen dim /></div>
        <div className="mr-[7px] flex w-[30px] justify-center"><TableIcon dim /></div>
      </div>
      {segments.map((s) => (
        <div key={s.name} className="flex h-[36px] items-center pl-[70px]">
          <BrainIcon />
          <span className="ml-[14px] w-[850px] text-[24px] leading-none pb-[4px] text-[#111]">{s.name}</span>
          <div className="flex w-[26px] justify-center">{s.shown ? <EyeOpen /> : <EyeClosed />}</div>
          <div className={`ml-[16px] h-[32px] w-[32px] ${s.color}`} />
        </div>
      ))}

      <div className="absolute left-[370px] top-[158px] h-[359px] w-[578px] overflow-hidden border-2 border-[#a0a0a0] border-t-[#8c8c8c] border-b-[#8c8c8c] bg-white shadow-[0_10px_26px_rgba(0,0,0,0.28)]">
        <div className="-mt-[2px]">
          {menuItems.map((item, i) => (
            <div key={item} className={`flex h-[40px] items-center pl-[55px] pb-[4px] text-[24px] leading-none ${i === 5 ? 'border-y-2 border-[#c9ab6e] bg-[#e9c580] text-[#fff9ea]' : 'text-[#1a1a1a]'}`}>
              {item}
            </div>
          ))}
        </div>
      </div>
      <div className="absolute left-[342px] top-[342px] h-[64px] w-[625px] rounded-[10px] border-[6px] border-[#ee4125]" />
    </div>
  );
}

export default function App() {
  return (
    <div className={`flex h-[1386px] w-[2004px] flex-col overflow-hidden bg-[#ececec] ${SANS}`}>
      <div className="h-[6px] shrink-0 border-b-2 border-[#b0b0b0] bg-[#d0d0d0]" />

      {/* toolbar */}
      <div className="flex h-[75px] shrink-0 items-center border-b-2 border-[#b9b9b9] bg-gradient-to-b from-[#f8f8f8] to-[#f2f2f2] text-black">
        <Grip className="ml-[10px]" />
        <FolderIcon label="DATA" className="ml-[18px]">
          <Arrow x={0} up color="#1d7a4e" />
        </FolderIcon>
        <FolderIcon label="DCM" className="ml-[21px]">
          <Arrow x={0} up={false} color="#7a3fa8" />
          <Arrow x={21} up color="#7a3fa8" />
        </FolderIcon>
        <FolderIcon label="SAVE" className="ml-[21px]">
          <Arrow x={0} up={false} color="#e05a1c" />
        </FolderIcon>
        <Grip className="ml-[27px]" />
        <span className="ml-[8px] pb-[2px] text-[24px] leading-none">Modules:</span>
        <Magnifier className="ml-[19px]" />
        <div className="ml-[23px] flex h-[47px] w-[418px] shrink-0 items-center rounded-[5px] border-2 border-[#ababab] bg-gradient-to-b from-[#fbfbfb] to-[#ebebeb] pl-[11px] pr-[14px]">
          <DicomModuleIcon />
          <span className="ml-[9px] flex-1 pb-[4px] text-[24px] leading-none">DICOM</span>
          <MenuDown />
        </div>
        <div className="ml-[19px] flex h-[48px] w-[44px] shrink-0 flex-col justify-between pb-[2px] pt-[10px]">
          <StopsIcon />
          <SmallDown className="self-end" />
        </div>
        <div className="ml-[17px] relative shrink-0 h-[44px] w-[52px]">
          <HistoryArrow back />
          <SmallDown className="absolute bottom-[-4px] right-[3px]" />
        </div>
        <div className="ml-[14px] relative shrink-0 h-[44px] w-[52px]">
          <HistoryArrow back={false} />
          <SmallDown className="absolute bottom-[-4px] right-[3px]" />
        </div>
        <Grip className="ml-[22px]" />
        <CubeIcon className="ml-[16px]" />
        <BarrelIcon className="ml-[23px]" />
        <GridPlaneIcon className="ml-[29px]" />
        <PlotPencilIcon className="ml-[25px]" />
        <WhitePencilIcon className="ml-[24px]" />
        <Grip className="ml-[28px]" />
        <LayoutChartIcon className="ml-[20px]" />
        <Grip className="ml-[22px]" />
        <div className="ml-[8px] flex h-[61px] w-[63px] shrink-0 items-center justify-center rounded-[6px] border-2 border-[#b2b2b2] bg-[#dcdcdc]">
          <PointerIcon />
        </div>
        <WindowLevelIcon className="ml-[16px]" />
        <MenuDown className="ml-[16px]" />
        <FiducialIcon className="ml-[31px]" />
        <MenuDown className="ml-[23px]" />
        <Grip className="ml-[23px]" />
        <CameraIcon className="ml-[24px]" />
        <SceneCameraIcon className="ml-[23px]" />
        <SceneCameraIcon stacked className="ml-[25px]" />
      </div>

      <div className="flex min-h-0 flex-1">
        {/* module panel */}
        <div className="relative w-[1116px] shrink-0 overflow-hidden">
          <div className="flex h-[39px] justify-end gap-[8px] pr-[16px] pt-[11px]">
            <svg width="21" height="22" viewBox="0 0 21 22">
              <rect x="1" y="1" width="19" height="20" rx="3" fill="none" stroke="#777" strokeWidth="2" />
              <rect x="8" y="5" width="8" height="9" fill="none" stroke="#777" strokeWidth="1.6" />
              <rect x="5" y="8" width="8" height="9" fill="#ececec" stroke="#777" strokeWidth="1.6" />
            </svg>
            <svg width="21" height="22" viewBox="0 0 21 22">
              <rect x="1" y="1" width="19" height="20" rx="3" fill="none" stroke="#777" strokeWidth="2" />
              <path d="M6 6 L15 16 M15 6 L6 16" stroke="#333" strokeWidth="3" />
            </svg>
          </div>
          <div className="h-[161px]">
            <SlicerLogo />
          </div>
          <div className="mr-[12px]">
            <Collapsible label="Help & Acknowledgement" open={false} tall="h-[42px]" triangle="ml-[17px]" textClass="ml-[19px]" />
          </div>
          <div className="mr-[12px] h-[27px] border-x-2 border-b-2 border-[#b4b4b4] bg-[#e6e6e6]" />

          <div className="ml-[6px] mt-[14px] flex h-[75px] w-[1091px] gap-[7px]">
            <button className="flex w-[544px] items-center rounded-[5px] border-2 border-[#ababab] bg-gradient-to-b from-[#f9f9f9] to-[#e5e5e5] pl-[85px]">
              <ImportIcon />
              <DatabaseIcon w={42} h={48} />
              <span className="ml-[32px] pb-[4px] text-[24px] leading-none text-[#1a1a1a]">Import DICOM files</span>
            </button>
            <button className="flex w-[540px] items-center rounded-[5px] border-2 border-[#ababab] bg-gradient-to-b from-[#f9f9f9] to-[#e5e5e5] pl-[100px]">
              <DatabaseIcon w={50} h={53} />
              <span className="ml-[37px] pb-[4px] text-[24px] leading-none text-[#1a1a1a]">Show DICOM database</span>
            </button>
          </div>

          <div className="ml-[6px] mt-[16px] flex h-[33px] items-center pb-[7px] text-[24px] font-bold leading-none text-[#111]">Loaded data</div>

          <DataTree />

          <div className="ml-[6px] mt-[8px] w-[1091px]">
            <Collapsible label="DICOM networking" open={false} tall="h-[43px]" triangle="ml-[17px]" textClass="ml-[19px]" />
          </div>
          <div className="ml-[6px] mt-[35px] w-[1091px]">
            <Collapsible label="DICOM database settings" open={false} tall="h-[43px]" triangle="ml-[17px]" textClass="ml-[19px]" />
          </div>
          <div className="mr-[12px] mt-[38px]">
            <Collapsible label="Data Probe" open tall="h-[43px]" triangle="ml-[15px]" textClass="ml-[16px]" />
          </div>

          <div className="ml-[20px] mt-[31px] flex h-[27px] items-center">
            <div className="h-[27px] w-[27px] border-2 border-[#b8b8b8] bg-white" />
            <span className="ml-[11px] pb-[2px] text-[24px] leading-none text-[#1a1a1a]">Show Zoomed Slice</span>
          </div>
          <div className="ml-[32px] mt-[24px] h-[36px] text-[24px] leading-[36px] text-[#111]">L</div>
          <div className="ml-[32px] h-[36px] text-[24px] leading-[36px] text-[#111]">F</div>

          <div className="absolute left-[1108px] top-[686px]">
            <Grip className="opacity-80" />
          </div>
        </div>

        {/* slice views */}
        <div className="flex w-[888px] shrink-0 flex-col pt-[3px]">
          <SliceBar
            name="R"
            value="S: -448.2000mm"
            pct={47.9}
            bar="border-r-[4px] border-[#5c82dc] bg-gradient-to-b from-[#d9482d] to-[#fb5238]"
            box="bg-[#fd8370]"
            valueBox="ml-[8px] w-[188px] mr-[2px] bg-[#fd8c7a]"
            trackClass="w-[570px]"
          />
          <div className="relative h-[666px] border-r-[4px] border-[#f0f0f0] bg-black">
            <AxialScan />
            <span className="absolute left-[4px] top-[604px] font-['DejaVu_Serif',serif] text-[24px] leading-none text-white">B: Unnamed Series</span>
          </div>
          <div className="h-[2px] bg-white" />
          <SliceBar
            name="G"
            value="A: 233.9884mm"
            pct={48.5}
            bar="border-r-[4px] border-[#e2c23a] bg-gradient-to-b from-[#6aab4c] to-[#78bd54]"
            box="bg-[#8fe361]"
            valueBox="ml-[9px] w-[176px] mr-[4px] bg-[#98e86c]"
            trackClass="w-[579px]"
          />
          <div className="relative flex-1 overflow-hidden border-r-[4px] border-[#f0f0f0] bg-black">
            <CoronalScan />
            <span className="absolute bottom-[10px] right-[10px] font-['Liberation_Sans','Noto_Sans_CJK_SC',sans-serif] text-[19px] leading-none text-[#b5b5b5]">CSDN @吨吨不打野</span>
          </div>
        </div>
      </div>
    </div>
  );
}
